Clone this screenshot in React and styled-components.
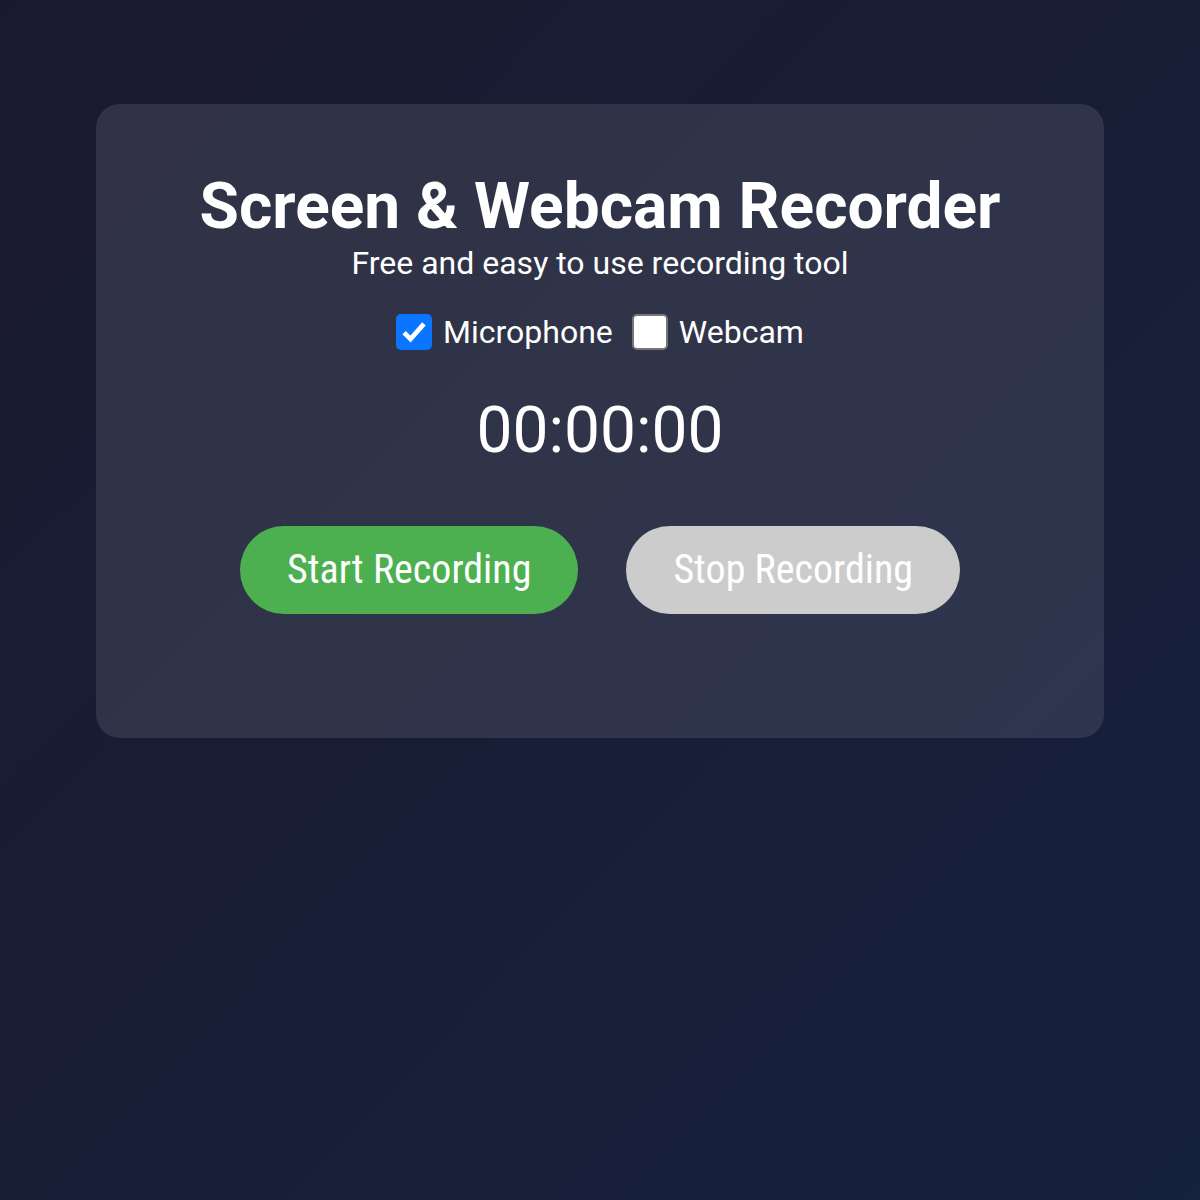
import React, { useState } from "react";
import styled, { createGlobalStyle } from "styled-components";

const Global = createGlobalStyle`
  html, body { margin: 0; padding: 0; }
  body {
    min-height: 100vh;
    background: linear-gradient(135deg, #1a1a2e 0%, #16213e 100%);
    font-family: Roboto, "Noto Sans", sans-serif;
    color: #ffffff;
  }
  #root { min-height: 1200px; }
`;

const Page = styled.div`
  min-height: 1200px;
  padding: 104px 96px 0;
  box-sizing: border-box;
`;

const Card = styled.div`
  background: rgba(255, 255, 255, 0.1);
  border-radius: 24px;
  padding: 65px 40px 124px;
  display: flex;
  flex-direction: column;
  align-items: center;
  text-align: center;
`;

const Title = styled.h1`
  margin: 0;
  font-size: 64px;
  line-height: 76px;
  font-weight: 700;
  color: #fff;
`;

const Subtitle = styled.p`
  margin: 0;
  font-size: 32px;
  line-height: 37px;
  color: #fff;
`;

const Options = styled.div`
  margin-top: 30px;
  display: flex;
  align-items: center;
  gap: 19px;
  height: 40px;
`;

const Option = styled.label`
  display: flex;
  align-items: center;
  gap: 11px;
  font-size: 32px;
  line-height: 40px;
  cursor: pointer;
`;

const Box = styled.span`
  width: 36px;
  height: 36px;
  box-sizing: border-box;
  border-radius: 5px;
  display: flex;
  align-items: center;
  justify-content: center;
  background: ${(p) => (p.$checked ? "#0b75ff" : "#ffffff")};
  border: ${(p) => (p.$checked ? "none" : "2px solid #767676")};
`;

const Timer = styled.div`
  margin-top: 41px;
  font-size: 64px;
  line-height: 76px;
  font-weight: 400;
`;

const Buttons = styled.div`
  margin-top: 57px;
  display: flex;
  gap: 48px;
`;

const Button = styled.button`
  font-family: Roboto, "Noto Sans", sans-serif;
  font-size: 40px;
  font-stretch: 87.5%;
  font-weight: 400;
  line-height: 40px;
  padding: 24px 47px;
  border: none;
  border-radius: 44px;
  color: #fff;
  background: ${(p) => (p.$variant === "start" ? "#4caf50" : "#cccccc")};
  cursor: ${(p) => (p.disabled ? "default" : "pointer")};
`;

function Check({ checked, onToggle, children }) {
  return (
    <Option onClick={onToggle}>
      <Box $checked={checked}>
        {checked && (
          <svg width="28" height="28" viewBox="0 0 24 24">
            <path d="M3.5 12.5l5.5 5.5L20.5 5" fill="none" stroke="#fff" strokeWidth="4" strokeLinecap="butt" />
          </svg>
        )}
      </Box>
      {children}
    </Option>
  );
}

export default function App() {
  const [mic, setMic] = useState(true);
  const [cam, setCam] = useState(false);
  return (
    <>
      <Global />
      <Page>
        <Card>
          <Title>Screen &amp; Webcam Recorder</Title>
          <Subtitle>Free and easy to use recording tool</Subtitle>
          <Options>
            <Check checked={mic} onToggle={() => setMic(!mic)}>Microphone</Check>
            <Check checked={cam} onToggle={() => setCam(!cam)}>Webcam</Check>
          </Options>
          <Timer>00:00:00</Timer>
          <Buttons>
            <Button $variant="start">Start Recording</Button>
            <Button $variant="stop" disabled>Stop Recording</Button>
          </Buttons>
        </Card>
      </Page>
    </>
  );
}
